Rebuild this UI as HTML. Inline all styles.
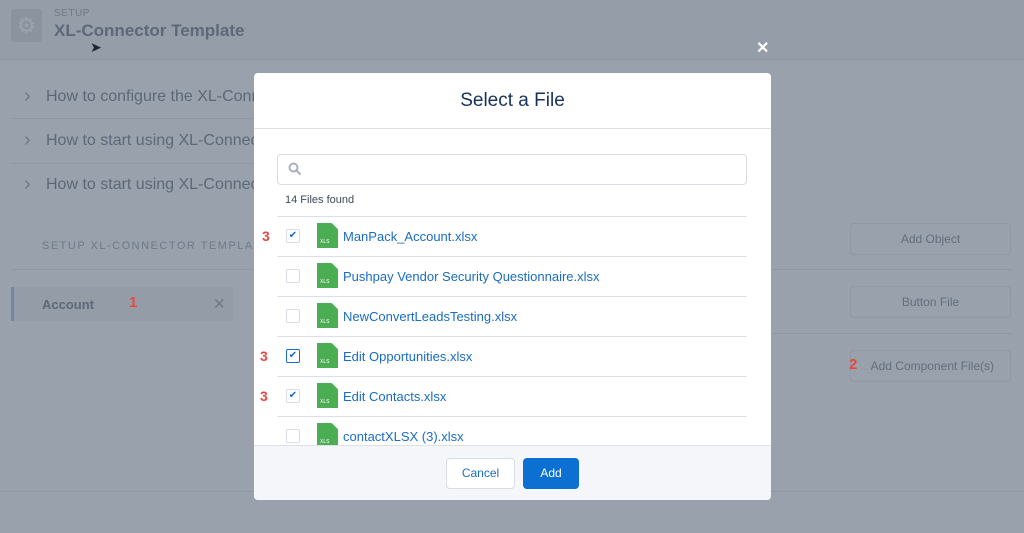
<!DOCTYPE html>
<html><head><style>
*{box-sizing:border-box;margin:0;padding:0}
body{width:1024px;height:533px;overflow:hidden;background:#98a1ac;font-family:"Liberation Sans",sans-serif;position:relative}
.a{position:absolute}
.hdr{left:0;top:0;width:1024px;height:60px;background:#949da8;border-bottom:1px solid #8c95a0}
.acc{color:#5d6878;font-size:16px;white-space:nowrap;overflow:hidden;width:208px}
.chev{color:#6f7a88;font-size:20px}
.line{height:1px;background:#8e97a2}
.btn{border:1px solid #8f98a3;border-radius:4px;color:#646f7e;font-size:12px;text-align:center;line-height:30px}
.modal{left:254px;top:73px;width:517px;height:427px;background:#fff;border-radius:4px;overflow:hidden}
.row{left:23px;width:470px;height:40px;border-top:1px solid #dde1e6}
.cb{position:absolute;left:9px;top:12px;width:14px;height:14px;border:1px solid #d8dde6;border-radius:2px;background:#fff;color:#1a6cc4;font-size:10px;line-height:12px;text-align:center}
.ic{position:absolute;left:40px;top:6px;width:21px;height:25px;background:#4bae52;clip-path:polygon(0 0,70% 0,100% 25%,100% 100%,0 100%)}
.ic span{position:absolute;bottom:3px;left:3px;color:#fff;font-size:5px}
.fn{position:absolute;left:66px;top:12px;color:#1a6cc4;font-size:13px}
.n3{position:absolute;left:-15px;top:11px;color:#e8493f;font-weight:bold;font-size:14px}
</style></head><body>
<div class="a hdr"></div>
<div class="a" style="left:11px;top:9px;width:31px;height:33px;background:#8a939e;border-radius:3px;color:#9aa3ae;font-size:22px;text-align:center;line-height:33px">⚙</div>
<div class="a" style="left:54px;top:8px;font-size:10px;color:#6f7a88;letter-spacing:.5px">SETUP</div>
<div class="a" style="left:54px;top:21px;font-size:17px;font-weight:bold;color:#5d6878">XL-Connector Template</div>
<div class="a" style="left:90px;top:39px;font-size:14px;color:#1c2733">➤</div>
<div class="a chev" style="left:24px;top:85px">›</div>
<div class="a acc" style="left:46px;top:88px">How to configure the XL-Connector</div>
<div class="a line" style="left:11px;top:118px;width:250px"></div>
<div class="a chev" style="left:24px;top:129px">›</div>
<div class="a acc" style="left:46px;top:132px">How to start using XL-Connector</div>
<div class="a line" style="left:11px;top:163px;width:250px"></div>
<div class="a chev" style="left:24px;top:173px">›</div>
<div class="a acc" style="left:46px;top:176px">How to start using XL-Connector</div>
<div class="a" style="left:42px;top:240px;font-size:11px;color:#6f7a88;letter-spacing:1.5px">SETUP XL-CONNECTOR TEMPLATE</div>
<div class="a line" style="left:11px;top:269px;width:250px"></div>
<div class="a" style="left:11px;top:287px;width:222px;height:34px;background:#939ca7;border-left:3px solid #6f87a8"></div>
<div class="a" style="left:42px;top:297px;font-size:13px;font-weight:bold;color:#5d6878">Account</div>
<div class="a" style="left:129px;top:294px;font-size:15px;font-weight:bold;color:#e8493f">1</div>
<div class="a" style="left:213px;top:295px;font-size:15px;color:#6f7a88">✕</div>
<div class="a btn" style="left:850px;top:223px;width:161px">Add Object</div>
<div class="a line" style="left:771px;top:269px;width:242px"></div>
<div class="a btn" style="left:850px;top:286px;width:161px">Button File</div>
<div class="a line" style="left:771px;top:333px;width:242px"></div>
<div class="a btn" style="left:850px;top:350px;width:161px;text-align:right;padding-right:16px">Add Component File(s)</div>
<div class="a" style="left:849px;top:356px;font-size:15px;font-weight:bold;color:#e8493f">2</div>
<div class="a line" style="left:0;top:491px;width:1024px"></div>
<div class="a" style="left:756px;top:38px;font-size:16px;color:#fff;font-weight:bold">✕</div>
<div class="a modal">
 <div class="a" style="left:0;top:0;width:517px;height:56px;border-bottom:1px solid #dde1e6;text-align:center;line-height:56px;font-size:19px;color:#16325c">Select a File</div>
 <div class="a" style="left:23px;top:81px;width:470px;height:31px;border:1px solid #d8dde6;border-radius:4px"></div>
 <svg class="a" style="left:34px;top:89px" width="14" height="14"><circle cx="5.5" cy="5.5" r="4" fill="none" stroke="#a8b0ba" stroke-width="2"/><path d="M8.5 8.5l4 4" stroke="#a8b0ba" stroke-width="2"/></svg>
 <div class="a" style="left:31px;top:121px;font-size:11px;color:#3e4a5a">14 Files found</div>
 <div class="a row" style="top:143px"><span class="n3">3</span><div class="cb">✔</div><div class="ic"><span>XLS</span></div><div class="fn">ManPack_Account.xlsx</div></div>
 <div class="a row" style="top:183px"><div class="cb"></div><div class="ic"><span>XLS</span></div><div class="fn">Pushpay Vendor Security Questionnaire.xlsx</div></div>
 <div class="a row" style="top:223px"><div class="cb"></div><div class="ic"><span>XLS</span></div><div class="fn">NewConvertLeadsTesting.xlsx</div></div>
 <div class="a row" style="top:263px"><span class="n3" style="left:-17px">3</span><div class="cb" style="border-color:#1a6cc4">✔</div><div class="ic"><span>XLS</span></div><div class="fn">Edit Opportunities.xlsx</div></div>
 <div class="a row" style="top:303px"><span class="n3" style="left:-17px">3</span><div class="cb">✔</div><div class="ic"><span>XLS</span></div><div class="fn">Edit Contacts.xlsx</div></div>
 <div class="a row" style="top:343px;height:29px;overflow:hidden"><div class="cb"></div><div class="ic"><span>XLS</span></div><div class="fn">contactXLSX (3).xlsx</div></div>
 <div class="a" style="left:0;top:372px;width:517px;height:55px;background:#f4f6f9;border-top:1px solid #dde1e6"></div>
 <div class="a" style="left:192px;top:385px;width:69px;height:31px;border:1px solid #d8dde6;border-radius:4px;background:#fff;color:#1a6cc4;font-size:12px;text-align:center;line-height:29px">Cancel</div>
 <div class="a" style="left:269px;top:385px;width:56px;height:31px;border-radius:4px;background:#0c70d2;color:#fff;font-size:12px;text-align:center;line-height:31px">Add</div>
</div>
</body></html>
